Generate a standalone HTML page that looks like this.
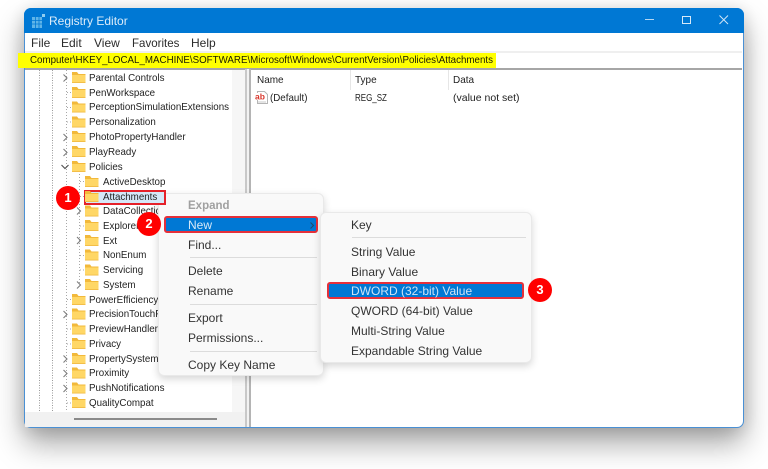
<!DOCTYPE html>
<html><head><meta charset="utf-8"><style>
*{margin:0;padding:0;box-sizing:border-box}
html,body{width:768px;height:469px;background:#fff;overflow:hidden;font-family:"Liberation Sans",sans-serif}
#s{position:relative;width:768px;height:469px;overflow:hidden;filter:blur(.3px)}
.a{position:absolute}
.t{position:absolute;white-space:nowrap;color:#222;font-size:10.5px;line-height:14px;height:14px;transform:scaleX(.93);transform-origin:0 0}
.l{transform:scaleX(.95)}
.m{font-size:12px;color:#2b2b2b;transform:none}
.b{font-size:12px;color:#333;transform:none}
.sep{position:absolute;height:1px;background:#dcdcdc}
.c{position:absolute;width:24px;height:24px;border-radius:50%;background:#f00;color:#fff;font-size:13px;font-weight:bold;text-align:center;line-height:24px}
svg{position:absolute;overflow:visible}
</style></head><body><div id="s">
<svg width="0" height="0" style="position:absolute"><defs>
<g id="f"><path d="M0 1h5l1.5 2H13.5V12H0z" fill="#f2b93b"/><path d="M0 4h13.5V12H0z" fill="#ffd766"/><path d="M0 11.2h13.5v.8H0z" fill="#f0b840"/></g>
<path id="ch" d="M0 0l3.5 3.5L0 7" fill="none" stroke="#7d7d7d" stroke-width="1.1"/>
</defs></svg>
<!-- window -->
<div class="a" style="left:24px;top:8px;width:720px;height:420px;border-radius:7px;background:#fff;border:1px solid #4a90d4;box-shadow:0 16px 30px rgba(0,0,0,.34),0 2px 18px rgba(0,0,0,.14)"></div>
<div class="a" style="left:24px;top:8px;width:720px;height:25px;background:#0078d4;border-radius:7px 7px 0 0"></div>
<svg style="left:32px;top:14px" width="14" height="14"><path d="M0 3h10v11H0z" fill="#5fb4e8"/><path d="M0 6.5h10M0 10h10M3.5 3v11M7 3v11" stroke="#0078d4" stroke-width=".8"/><path d="M10 0h3v3h-3z" fill="#8fcdf0"/></svg>
<div class="t" style="left:49px;top:14px;color:#dcecf9;font-size:12px;transform:none">Registry Editor</div>
<div class="a" style="left:645px;top:19px;width:9px;height:1px;background:#b5d6f1"></div>
<div class="a" style="left:682px;top:15.5px;width:8.5px;height:8.5px;border:1px solid #d6e9f8"></div>
<svg style="left:719px;top:15px" width="10" height="10"><path d="M.5.5l8.5 8.5M9 .5L.5 9" stroke="#cfe5f6" stroke-width="1" fill="none"/></svg>
<!-- menu -->
<div class="t m" style="left:31px;top:36px">File</div>
<div class="t m" style="left:61px;top:36px">Edit</div>
<div class="t m" style="left:94px;top:36px">View</div>
<div class="t m" style="left:132px;top:36px;transform:scaleX(.96)">Favorites</div>
<div class="t m" style="left:191px;top:36px">Help</div>
<!-- address -->
<div class="a" style="left:25px;top:51px;width:717px;height:1.5px;background:#efefef"></div>
<div class="a" style="left:25px;top:68px;width:717px;height:1.5px;background:#a6a6a6"></div>
<div class="a" style="left:18px;top:53px;width:478px;height:15px;background:#ffff00"></div>
<div class="t" style="left:30px;top:54px;color:#1b1b00;font-size:10.3px;transform:scaleX(.947)">Computer\HKEY_LOCAL_MACHINE\SOFTWARE\Microsoft\Windows\CurrentVersion\Policies\Attachments</div>
<!-- panes -->
<div class="a" style="left:232px;top:70px;width:13px;height:342px;background:#f6f6f6"></div>
<div class="a" style="left:25px;top:412px;width:220px;height:15px;background:#f1f1f1"></div>
<div class="a" style="left:74px;top:418px;width:143px;height:2px;background:#8a8a8a"></div>
<div class="a" style="left:245px;top:69px;width:2px;height:358px;background:#c8c8c8"></div>
<div class="a" style="left:247px;top:69px;width:2px;height:358px;background:#f2f2f2"></div>
<div class="a" style="left:249px;top:69px;width:1.5px;height:358px;background:#b4b4b4"></div>
<!-- tree lines -->
<svg style="left:0;top:0" width="768" height="469">
<path d="M39.5 70V412M52.5 70V412" stroke="#9a9a9a" stroke-dasharray="1 1.5" fill="none"/>
<path d="M66.5 70V412M79.5 174V285" stroke="#a8a8a8" stroke-dasharray="1 2" fill="none"/>
<path d="M67 92.5h5M67 107.5h5M67 122h5M67 299.5h5M67 329h5M67 344h5M67 403h5M80 181.5h5M80 196.5h5M80 226h5M80 255.5h5M80 270h5" stroke="#a8a8a8" stroke-dasharray="1 2" fill="none"/>
</svg>
<!-- chevrons and folders -->
<svg style="left:0;top:0" width="768" height="469">
<use href="#ch" x="63.5" y="74.5"/><use href="#ch" x="63.5" y="134"/><use href="#ch" x="63.5" y="149"/>
<path d="M61.5 165l3.5 3.5 3.5-3.5" fill="none" stroke="#555" stroke-width="1.2"/>
<use href="#ch" x="77" y="207.5"/><use href="#ch" x="77" y="237"/><use href="#ch" x="77" y="281.5"/>
<use href="#ch" x="63.5" y="311"/><use href="#ch" x="63.5" y="355.5"/><use href="#ch" x="63.5" y="370"/><use href="#ch" x="63.5" y="385"/>
<use href="#f" x="72" y="71"/><use href="#f" x="72" y="86"/><use href="#f" x="72" y="100.5"/><use href="#f" x="72" y="115.5"/><use href="#f" x="72" y="130"/><use href="#f" x="72" y="145"/><use href="#f" x="72" y="160"/>
<use href="#f" x="85" y="175"/><use href="#f" x="85" y="204.5"/><use href="#f" x="85" y="219"/><use href="#f" x="85" y="234"/><use href="#f" x="85" y="248.5"/><use href="#f" x="85" y="263.5"/><use href="#f" x="85" y="278"/>
<use href="#f" x="72" y="293"/><use href="#f" x="72" y="307.5"/><use href="#f" x="72" y="322.5"/><use href="#f" x="72" y="337"/><use href="#f" x="72" y="352"/><use href="#f" x="72" y="366.5"/><use href="#f" x="72" y="381.5"/><use href="#f" x="72" y="396"/>
</svg>
<!-- tree text -->
<div class="t" style="left:89px;top:71px">Parental Controls</div>
<div class="t" style="left:89px;top:86px">PenWorkspace</div>
<div class="t" style="left:89px;top:100px">PerceptionSimulationExtensions</div>
<div class="t" style="left:89px;top:115px">Personalization</div>
<div class="t" style="left:89px;top:130px">PhotoPropertyHandler</div>
<div class="t" style="left:89px;top:145px">PlayReady</div>
<div class="t" style="left:89px;top:160px">Policies</div>
<div class="t" style="left:103px;top:175px">ActiveDesktop</div>
<div class="t" style="left:103px;top:204px">DataCollection</div>
<div class="t" style="left:103px;top:219px">Explorer</div>
<div class="t" style="left:103px;top:234px">Ext</div>
<div class="t" style="left:103px;top:248px">NonEnum</div>
<div class="t" style="left:103px;top:263px">Servicing</div>
<div class="t" style="left:103px;top:278px">System</div>
<div class="t" style="left:89px;top:293px">PowerEfficiencyDiagnostics</div>
<div class="t" style="left:89px;top:307px">PrecisionTouchPad</div>
<div class="t" style="left:89px;top:322px">PreviewHandlers</div>
<div class="t" style="left:89px;top:337px">Privacy</div>
<div class="t" style="left:89px;top:352px">PropertySystem</div>
<div class="t" style="left:89px;top:366px">Proximity</div>
<div class="t" style="left:89px;top:381px">PushNotifications</div>
<div class="t" style="left:89px;top:396px">QualityCompat</div>
<!-- list -->
<div class="t l" style="left:257px;top:73px">Name</div>
<div class="t l" style="left:355px;top:73px">Type</div>
<div class="t l" style="left:453px;top:73px">Data</div>
<div class="a" style="left:350px;top:70px;width:1px;height:20px;background:#e6e6e6"></div>
<div class="a" style="left:448px;top:70px;width:1px;height:20px;background:#e6e6e6"></div>
<svg style="left:255px;top:91px" width="13" height="13"><path d="M2.5.5h7l3 3v9h-10z" fill="#fff" stroke="#b5b5b5"/><path d="M1 2h9v7H1z" fill="#fff"/><text x="0" y="8.5" font-family="Liberation Sans" font-size="8.5" font-weight="bold" fill="#d8352a">ab</text><path d="M3 11h8" stroke="#c8c8c8"/></svg>
<div class="t l" style="left:270px;top:91px;transform:scaleX(.93)">(Default)</div>
<div class="t" style="left:355px;top:91px;transform:scaleX(.76)">REG_SZ</div>
<div class="t" style="left:453px;top:91px;transform:none">(value not set)</div>
<!-- context menu 1 -->
<div class="a" style="left:158px;top:193px;width:166px;height:183px;background:#f9f9f9;border-radius:6px;border:1px solid #e9e9e9;box-shadow:0 3px 8px rgba(0,0,0,.16)"></div>
<div class="t b" style="left:188px;top:199px;color:#a0a0a0;font-weight:bold;font-size:11.5px">Expand</div>
<div class="a" style="left:164px;top:216px;width:154px;height:16.5px;background:#0078d4;border:2px solid #e5303a;border-radius:3px"></div>
<div class="t b" style="left:188px;top:218px;color:#d6e8f7">New</div>
<svg style="left:309.5px;top:222px" width="5" height="7"><path d="M.5.5l3 3-3 3" fill="none" stroke="#1c4a70" stroke-width="1.1"/></svg>
<div class="t b" style="left:188px;top:238px">Find...</div>
<div class="sep" style="left:190px;top:257px;width:127px"></div>
<div class="t b" style="left:188px;top:264px">Delete</div>
<div class="t b" style="left:188px;top:284px">Rename</div>
<div class="sep" style="left:190px;top:304px;width:127px"></div>
<div class="t b" style="left:188px;top:311px">Export</div>
<div class="t b" style="left:188px;top:331px">Permissions...</div>
<div class="sep" style="left:190px;top:351px;width:127px"></div>
<div class="t b" style="left:188px;top:358px">Copy Key Name</div>
<!-- selected tree row annotation sits above the menu -->
<div class="a" style="left:84px;top:190px;width:81.5px;height:14.5px;background:#d5e8f8;border:2px solid #e5212a"></div>
<svg style="left:0;top:0" width="768" height="469"><use href="#f" x="85" y="190"/></svg>
<div class="t" style="left:103px;top:190px">Attachments</div>
<!-- context menu 2 -->
<div class="a" style="left:320px;top:212px;width:212px;height:151px;background:#f9f9f9;border-radius:6px;border:1px solid #e9e9e9;box-shadow:0 3px 8px rgba(0,0,0,.16)"></div>
<div class="t b" style="left:351px;top:218px">Key</div>
<div class="sep" style="left:352px;top:237px;width:174px"></div>
<div class="t b" style="left:351px;top:245px">String Value</div>
<div class="t b" style="left:351px;top:265px">Binary Value</div>
<div class="a" style="left:327px;top:282px;width:197px;height:17px;background:#0078d4;border:2px solid #e5303a;border-radius:3px"></div>
<div class="t b" style="left:351px;top:284px;color:#cfe3f5">DWORD (32-bit) Value</div>
<div class="t b" style="left:351px;top:304px">QWORD (64-bit) Value</div>
<div class="t b" style="left:351px;top:324px">Multi-String Value</div>
<div class="t b" style="left:351px;top:344px">Expandable String Value</div>
<!-- badges -->
<div class="c" style="left:56px;top:186px">1</div>
<div class="c" style="left:137px;top:212px">2</div>
<div class="c" style="left:528px;top:278px">3</div>
</div></body></html>
